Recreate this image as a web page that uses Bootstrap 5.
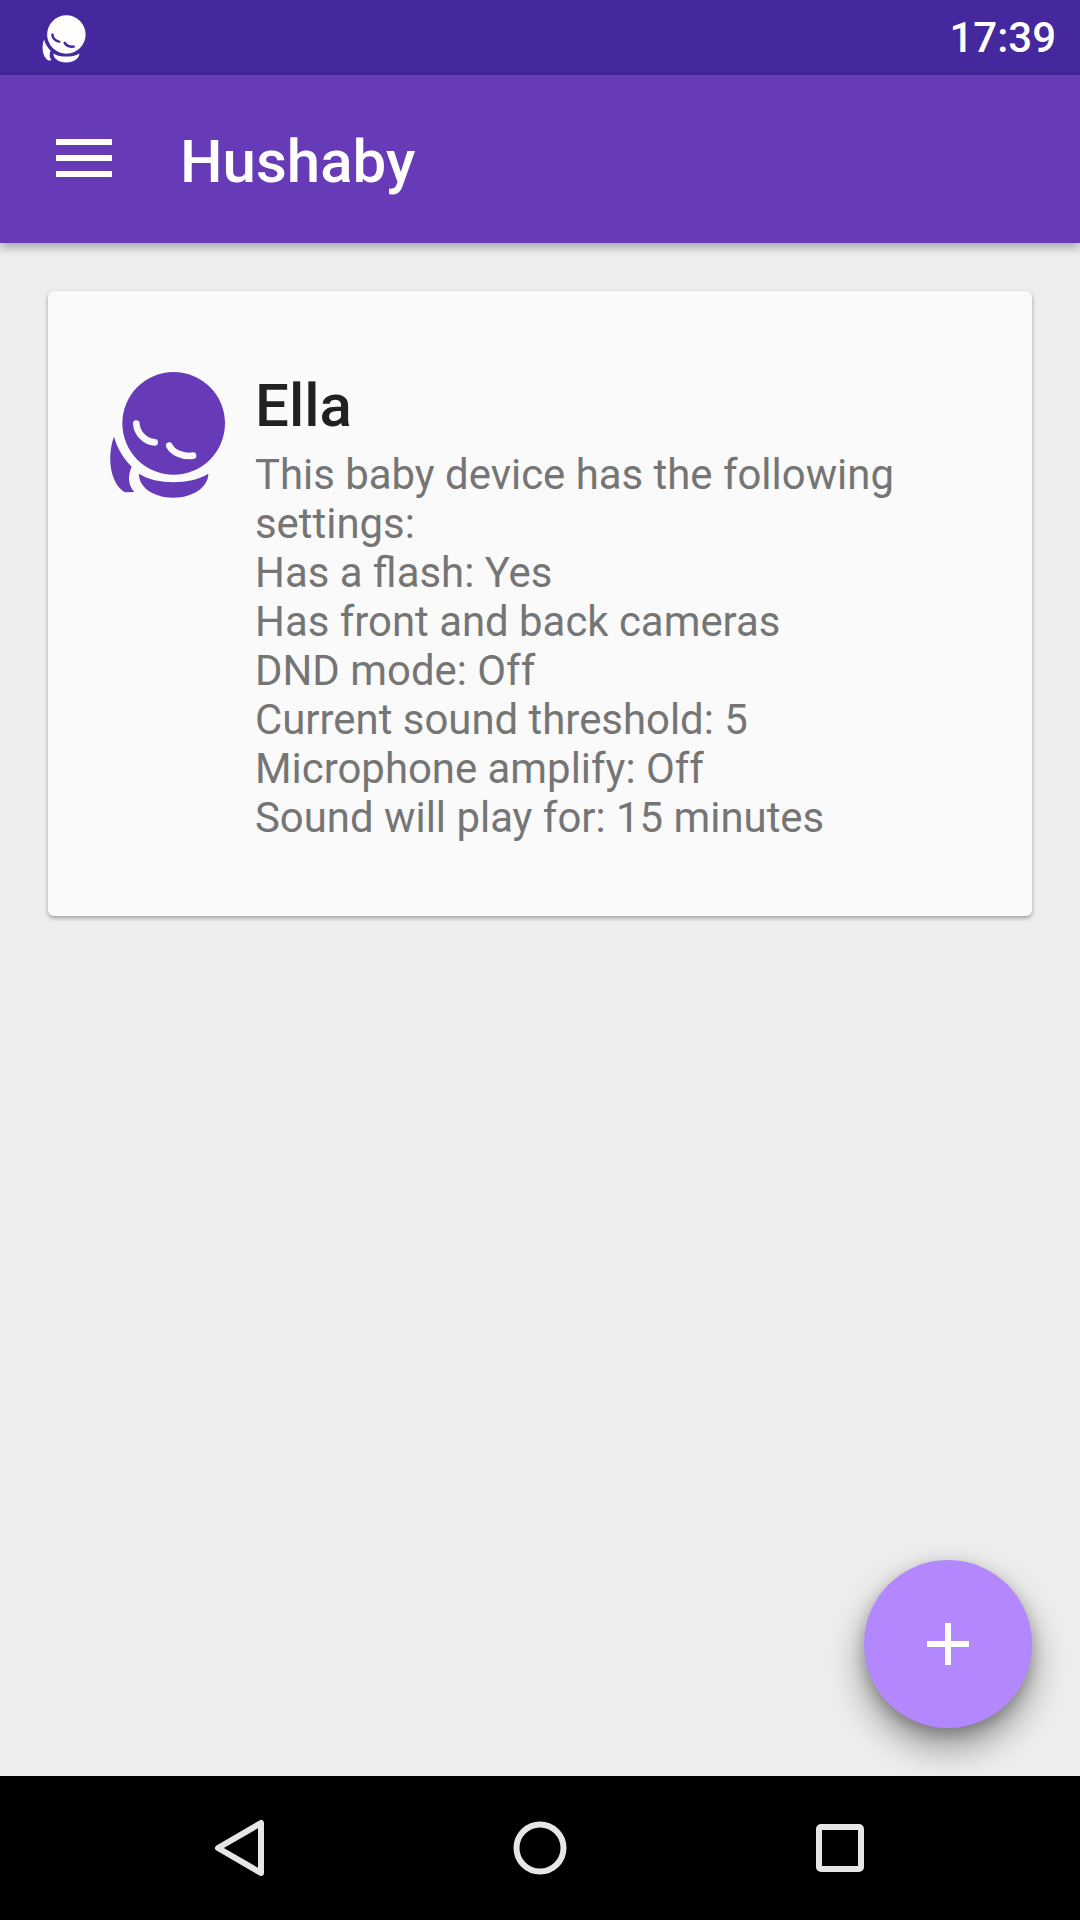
<!DOCTYPE html>
<html lang="en">
<head>
<meta charset="utf-8">
<title>Hushaby</title>
<link href="https://cdn.jsdelivr.net/npm/bootstrap@5.3.0/dist/css/bootstrap.min.css" rel="stylesheet">
<style>
html, body { width: 1080px; height: 1920px; margin: 0; overflow: hidden; }
body { font-family: Roboto, "Liberation Sans", sans-serif; background: #eeeeee; }
.app-shell { height: 1920px; }
.status-strip { height: 75px; background: #45289d; color: #fff; padding-left: 35px; padding-right: 24px; }
.status-logo { width: 60px; height: 60px; margin-top: -1px; }
.status-time { font-size: 42px; font-weight: 500; line-height: 1; }
.app-toolbar { height: 168px; background: #673ab7; box-shadow: 0 4px 10px rgba(0,0,0,.32); padding: 0 0 0 56px; z-index: 2; flex-wrap: nowrap; justify-content: flex-start; }
.menu-lines { width: 56px; gap: 10px; margin-top: -2px; }
.menu-lines span { display: block; height: 6px; background: #fff; }
.app-title { font-size: 60px; font-weight: 500; color: #fff; margin: 5px 0 0 68px; padding: 0; line-height: 1; }
.app-body { padding: 48px 48px 0; position: relative; }
.device-card { height: 625px; background: #fafafa; border: 0; border-radius: 6px; box-shadow: 0 2px 4px rgba(0,0,0,.35); padding: 58px 0 0 42px; }
.device-logo { width: 160px; height: 160px; flex: none; margin-top: 1px; }
.device-text { margin: 24px 0 0 5px; }
.device-name { font-size: 60px; font-weight: 500; color: #212121; line-height: 66px; margin: 0 0 11px; }
.device-info { font-size: 41.9px; line-height: 49px; color: #757575; margin: 0; width: 700px; }
.fab-add { position: absolute; right: 48px; bottom: 48px; width: 168px; height: 168px; border: 0; border-radius: 50%; background: #b388ff; box-shadow: 0 18px 36px rgba(0,0,0,.42), 0 5px 14px rgba(0,0,0,.2); padding: 0; }
.fab-add svg { display: block; margin: auto; width: 42px; height: 42px; }
.system-nav { height: 144px; background: #000; position: relative; }
.nav-key { position: absolute; top: 0; }
</style>
</head>
<body>
<svg width="0" height="0" class="position-absolute">
  <symbol id="hush-logo" viewBox="0 0 480 480">
    <circle cx="251" cy="220" r="154" fill="currentColor"/>
    <path d="M72 260C50 320 60 400 105 427L133 426C115 405 112 380 125 350C100 325 82 295 72 260Z" fill="currentColor"/>
    <path d="M147 371C200 405 300 405 355 371C355 410 310 443 250 443C190 443 145 410 147 371Z" fill="currentColor"/>
  </symbol>
</svg>
<div class="app-shell d-flex flex-column">
  <div class="status-strip d-flex align-items-center justify-content-between flex-none">
    <svg class="status-logo" viewBox="0 0 480 480" color="#fff">
      <use href="#hush-logo"/>
      <path d="M139 221C141 250 165 275 194 277M238 287C246 305 275 322 309 317" fill="none" stroke="#45289d" stroke-width="20" stroke-linecap="round"/>
    </svg>
    <span class="status-time">17:39</span>
  </div>
  <nav class="navbar app-toolbar align-items-center">
    <div class="menu-lines d-flex flex-column"><span></span><span></span><span></span></div>
    <span class="navbar-brand app-title">Hushaby</span>
  </nav>
  <main class="app-body flex-grow-1">
    <div class="card device-card d-flex flex-row">
      <svg class="device-logo" viewBox="0 0 480 480" color="#673ab7">
        <use href="#hush-logo"/>
        <path d="M139 221C141 250 165 275 194 277M238 287C246 305 275 322 309 317" fill="none" stroke="#fafafa" stroke-width="20" stroke-linecap="round"/>
      </svg>
      <div class="device-text">
        <h2 class="device-name">Ella</h2>
        <p class="device-info">This baby device has the following settings:<br>Has a flash: Yes<br>Has front and back cameras<br>DND mode: Off<br>Current sound threshold: 5<br>Microphone amplify: Off<br>Sound will play for: 15 minutes</p>
      </div>
    </div>
    <button class="btn fab-add" type="button" aria-label="Add">
      <svg viewBox="0 0 42 42"><path d="M18 0h6v18h18v6H24v18h-6V24H0v-6h18z" fill="#fff"/></svg>
    </button>
  </main>
  <div class="system-nav">
    <svg class="nav-key" width="1080" height="144" viewBox="0 1776 1080 144" fill="none" stroke="#e6e6e6" stroke-width="6" stroke-linejoin="round">
      <path d="M218 1848L261 1823V1873Z"/>
      <circle cx="540" cy="1848" r="23.5"/>
      <rect x="819" y="1827" width="42" height="42" rx="2"/>
    </svg>
  </div>
</div>
</body>
</html>
